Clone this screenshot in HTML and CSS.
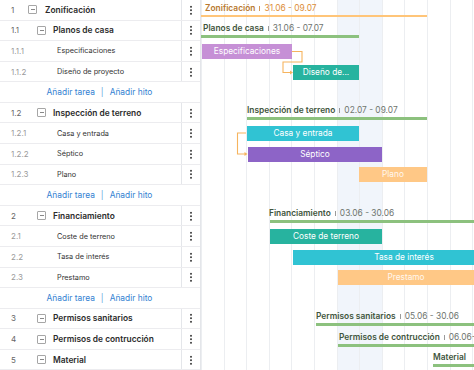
FILE: index.html
```html
<!DOCTYPE html>
<html lang="es">
<head>
<meta charset="utf-8">
<title>Gantt</title>
<link rel="stylesheet" href="styles.css">
</head>
<body>
<div class="gantt">
  <div class="grid-panel">
    <div class="row summary"><div class="cell"><span class="num">1</span><span class="toggle"></span><span class="name">Zonificación</span></div><div class="menu"><span class="dots"></span></div></div>
    <div class="row summary"><div class="cell"><span class="num">1.1</span><span class="toggle lvl1"></span><span class="name">Planos de casa</span></div><div class="menu"><span class="dots"></span></div></div>
    <div class="row"><div class="cell"><span class="num leaf-num">1.1.1</span><span class="name leaf">Especificaciones</span></div><div class="menu"><span class="dots"></span></div></div>
    <div class="row"><div class="cell"><span class="num leaf-num">1.1.2</span><span class="name leaf">Diseño de proyecto</span></div><div class="menu"><span class="dots"></span></div></div>
    <div class="row add"><a class="link">Añadir tarea</a><span class="sep">|</span><a class="link">Añadir hito</a></div>
    <div class="row summary"><div class="cell"><span class="num">1.2</span><span class="toggle lvl1"></span><span class="name">Inspección de terreno</span></div><div class="menu"><span class="dots"></span></div></div>
    <div class="row"><div class="cell"><span class="num leaf-num">1.2.1</span><span class="name leaf">Casa y entrada</span></div><div class="menu"><span class="dots"></span></div></div>
    <div class="row"><div class="cell"><span class="num leaf-num">1.2.2</span><span class="name leaf">Séptico</span></div><div class="menu"><span class="dots"></span></div></div>
    <div class="row"><div class="cell"><span class="num leaf-num">1.2.3</span><span class="name leaf">Plano</span></div><div class="menu"><span class="dots"></span></div></div>
    <div class="row add"><a class="link">Añadir tarea</a><span class="sep">|</span><a class="link">Añadir hito</a></div>
    <div class="row summary"><div class="cell"><span class="num">2</span><span class="toggle lvl1"></span><span class="name">Financiamiento</span></div><div class="menu"><span class="dots"></span></div></div>
    <div class="row"><div class="cell"><span class="num leaf-num">2.1</span><span class="name leaf">Coste de terreno</span></div><div class="menu"><span class="dots"></span></div></div>
    <div class="row"><div class="cell"><span class="num leaf-num">2.2</span><span class="name leaf">Tasa de interés</span></div><div class="menu"><span class="dots"></span></div></div>
    <div class="row"><div class="cell"><span class="num leaf-num">2.3</span><span class="name leaf">Prestamo</span></div><div class="menu"><span class="dots"></span></div></div>
    <div class="row add"><a class="link">Añadir tarea</a><span class="sep">|</span><a class="link">Añadir hito</a></div>
    <div class="row summary"><div class="cell"><span class="num">3</span><span class="toggle lvl1"></span><span class="name">Permisos sanitarios</span></div><div class="menu"><span class="dots"></span></div></div>
    <div class="row summary"><div class="cell"><span class="num">4</span><span class="toggle lvl1"></span><span class="name">Permisos de contrucción</span></div><div class="menu"><span class="dots"></span></div></div>
    <div class="row summary"><div class="cell"><span class="num">5</span><span class="toggle lvl1"></span><span class="name">Material</span></div><div class="menu"><span class="dots"></span></div></div>
  </div>

  <div class="chart">
    <div class="crow"><div class="sum-label orange" style="left:4px"><b>Zonificación</b><i class="bar-sep"></i><span>31.06 - 09.07</span></div><div class="sum-bar orange" style="left:0;width:226px"></div></div>
    <div class="crow"><div class="sum-label" style="left:2px"><b>Planos de casa</b><i class="bar-sep"></i><span>31.06 - 07.07</span></div><div class="sum-bar" style="left:0;width:158px"></div></div>
    <div class="crow"><div class="task lilac" style="left:1px;width:90px">Especificaciones</div></div>
    <div class="crow"><div class="task teal" style="left:92px;width:66px">Diseño de...</div></div>
    <div class="crow"></div>
    <div class="crow"><div class="sum-label" style="left:46px"><b>Inspección de terreno</b><i class="bar-sep"></i><span>02.07 - 09.07</span></div><div class="sum-bar" style="left:46px;width:180px"></div></div>
    <div class="crow"><div class="task cyan" style="left:46px;width:112px">Casa y entrada</div></div>
    <div class="crow"><div class="task purple" style="left:47px;width:134px">Séptico</div></div>
    <div class="crow"><div class="task peach" style="left:158px;width:68px">Plano</div></div>
    <div class="crow"></div>
    <div class="crow"><div class="sum-label" style="left:68px"><b>Financiamiento</b><i class="bar-sep"></i><span>03.06 - 30.06</span></div><div class="sum-bar" style="left:69px;width:220px"></div></div>
    <div class="crow"><div class="task teal" style="left:69px;width:112px">Coste de terreno</div></div>
    <div class="crow"><div class="task cyan" style="left:92px;width:222px">Tasa de interés</div></div>
    <div class="crow"><div class="task peach" style="left:137px;width:136px">Prestamo</div></div>
    <div class="crow"></div>
    <div class="crow"><div class="sum-label" style="left:115px"><b>Permisos sanitarios</b><i class="bar-sep"></i><span>05.06 - 30.06</span></div><div class="sum-bar" style="left:115px;width:200px"></div></div>
    <div class="crow"><div class="sum-label" style="left:138px"><b>Permisos de contrucción</b><i class="bar-sep"></i><span>06.06-</span></div><div class="sum-bar" style="left:137px;width:200px"></div></div>
    <div class="crow"><div class="sum-label" style="left:232px"><b>Material</b></div><div class="sum-bar" style="left:232px;width:100px"></div></div>

    <svg class="links" width="273" height="370" viewBox="0 0 273 370">
      <path d="M91 51.5 H101 V62 H82 V72.5 H90" fill="none" stroke="#f6b45e" stroke-width="1.1"/>
      <path d="M89 70.5 L92 72.5 L89 74.5 Z" fill="#f6b45e"/>
      <path d="M45 133 H36.5 V154 H44" fill="none" stroke="#f6b45e" stroke-width="1.1"/>
      <path d="M43.5 152 L46.5 154 L43.5 156 Z" fill="#f6b45e"/>
    </svg>
  </div>
</div>
</body>
</html>
```
FILE: styles.css
```css
:root {
  --row: 20.58px;
  --col: 22.6px;
}
* { box-sizing: border-box; }
html, body {
  margin: 0;
  padding: 0;
  background: #fff;
}
body {
  width: 474px;
  height: 370px;
  overflow: hidden;
  font-family: Inter, "Noto Sans", Roboto, sans-serif;
  font-size: 8px;
  color: #333;
}
.gantt {
  display: flex;
  width: 474px;
  height: 370px;
}
.grid-panel {
  width: 201px;
  flex: none;
  border-right: 1px solid #e4e6ea;
}
.row {
  height: var(--row);
  display: grid;
  grid-template-columns: 181px 19px;
  border-bottom: 1px solid #ececef;
}
.cell {
  display: flex;
  align-items: center;
  padding-left: 11px;
}
.num {
  width: 17px;
  flex: none;
  color: #666;
  font-size: 8px;
}
.num.leaf-num {
  color: #9a9a9a;
}
.toggle {
  width: 9px;
  height: 9px;
  flex: none;
  border: 1px solid #a6a6a6;
  border-radius: 1px;
  margin-right: 8px;
  position: relative;
}
.toggle::after {
  content: "";
  position: absolute;
  left: 1.5px;
  right: 1.5px;
  top: 3px;
  height: 1px;
  background: #888;
}
.toggle.lvl1 {
  margin-left: 9px;
  margin-right: 7px;
}
.name {
  font-weight: 600;
  font-size: 8.4px;
  color: #2b2b2b;
  white-space: nowrap;
}
.name.leaf {
  font-weight: 400;
  font-size: 7.3px;
  margin-left: 29px;
  color: #333;
}
.menu {
  border-left: 1px solid #e4e6ea;
  display: flex;
  align-items: center;
  justify-content: center;
}
.dots {
  width: 2px;
  height: 10px;
  background: radial-gradient(circle, #555 0.95px, transparent 1.15px) 0 0 / 2px 3.5px repeat-y;
}
.row.add {
  display: flex;
  align-items: center;
  justify-content: center;
  padding-right: 1px;
}
.link {
  color: #3482d2;
  font-size: 8.4px;
}
.sep {
  color: #6aa3de;
  margin: 0 6px;
  font-size: 8.4px;
}

/* chart */
.chart {
  position: relative;
  flex: 1;
  overflow: hidden;
  background-image:
    repeating-linear-gradient(to right, #eceef1 0 1px, transparent 1px var(--col)),
    linear-gradient(to right, transparent 135.6px, #f1f5fb 135.6px, #f1f5fb 180.8px, transparent 180.8px);
}
.crow {
  position: relative;
  height: var(--row);
}
.sum-label {
  position: absolute;
  top: 2.5px;
  white-space: nowrap;
  font-size: 8.4px;
  line-height: 10px;
  color: #6f756f;
  display: flex;
  align-items: center;
}
.sum-label b {
  font-weight: 600;
  color: #3f553d;
}
.sum-label.orange b {
  color: #b8782e;
}
.sum-label.orange span {
  color: #dd8e38;
}
.bar-sep {
  display: inline-block;
  width: 1px;
  height: 5px;
  background: #9a9a9a;
  margin: 1px 4px 0 4px;
}
.sum-label.orange .bar-sep {
  background: #d59a5a;
}
.sum-bar {
  position: absolute;
  top: 14.5px;
  height: 2.8px;
  background: #8cc17e;
}
.sum-bar.orange {
  background: #ffc579;
}
.task {
  position: absolute;
  top: 2.8px;
  height: 15px;
  color: #fff;
  font-size: 8.3px;
  line-height: 15px;
  text-align: center;
  white-space: nowrap;
  overflow: hidden;
}
.lilac { background: #c690d6; }
.teal { background: #27b39f; }
.cyan { background: #30c3d3; }
.purple { background: #8d64c7; }
.peach { background: #ffc886; color: #fff7ee; }
.links {
  position: absolute;
  left: 0;
  top: 0;
  pointer-events: none;
}
```
